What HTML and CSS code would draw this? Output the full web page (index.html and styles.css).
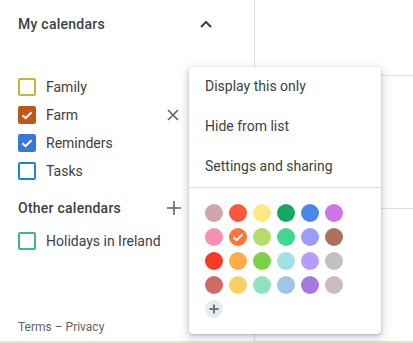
FILE: index.html
```html
<!DOCTYPE html>
<html lang="en">

<head>
    <meta charset="UTF-8">
    <meta name="viewport" content="width=device-width, initial-scale=1.0">
    <title>Calendars</title>
    <link rel="stylesheet" href="styles.css">
</head>

<body>
    <div id="app">
        <div class="sidebar">
            <div class="section-head head-mine">
                <span>My calendars</span>
                <svg class="chevron" width="12" height="8" viewBox="0 0 12 8"><path d="M1 7L6 2L11 7" fill="none" stroke="#3c4043" stroke-width="2"/></svg>
            </div>
            <ul class="cal-list">
                <li><span class="box" style="border-color:#c2b632"></span>Family</li>
                <li><span class="box checked" style="background:#c0561c;border-color:#c0561c"><svg viewBox="0 0 14 14"><path d="M2.5 7.2L5.6 10.2L11.5 4.3" fill="none" stroke="#fff" stroke-width="2"/></svg></span>Farm
                    <svg class="x-icon" width="12" height="12" viewBox="0 0 12 12"><path d="M1 1L11 11M11 1L1 11" stroke="#5f6368" stroke-width="1.6"/></svg>
                </li>
                <li><span class="box checked" style="background:#3a78d8;border-color:#3a78d8"><svg viewBox="0 0 14 14"><path d="M2.5 7.2L5.6 10.2L11.5 4.3" fill="none" stroke="#fff" stroke-width="2"/></svg></span>Reminders</li>
                <li><span class="box" style="border-color:#1d8bc1"></span>Tasks</li>
            </ul>
            <div class="section-head head-other">
                <span>Other calendars</span>
                <svg class="plus-icon" width="14" height="14" viewBox="0 0 14 14"><path d="M7 0V14M0 7H14" stroke="#5f6368" stroke-width="1.6"/></svg>
            </div>
            <ul class="cal-list">
                <li><span class="box" style="border-color:#47b384"></span>Holidays in Ireland</li>
            </ul>
            <div class="footer">Terms &ndash; Privacy</div>
        </div>
        <div class="grid">
            <div class="cell first"></div>
            <div class="cell"></div>
            <div class="cell"></div>
        </div>
    </div>
    <div class="bottom-line"></div>

    <div class="menu">
        <div class="menu-item">Display this only</div>
        <div class="menu-item">Hide from list</div>
        <div class="menu-item">Settings and sharing</div>
        <div class="divider"></div>
        <div class="swatches">
            <span class="dot" style="background:#cca6ac"></span>
            <span class="dot" style="background:#fa573c"></span>
            <span class="dot" style="background:#fbe983"></span>
            <span class="dot" style="background:#16a765"></span>
            <span class="dot" style="background:#4986e7"></span>
            <span class="dot" style="background:#cd74e6"></span>

            <span class="dot" style="background:#f691b2"></span>
            <span class="dot" style="background:#ff7537"><svg viewBox="0 0 18 18"><path d="M4.5 9.3L7.6 12.2L13.5 6.3" fill="none" stroke="#fff" stroke-width="2"/></svg></span>
            <span class="dot" style="background:#b3dc6c"></span>
            <span class="dot" style="background:#42d692"></span>
            <span class="dot" style="background:#9a9cff"></span>
            <span class="dot" style="background:#ac725e"></span>

            <span class="dot" style="background:#f83a22"></span>
            <span class="dot" style="background:#ffad46"></span>
            <span class="dot" style="background:#7bd148"></span>
            <span class="dot" style="background:#9fe1e7"></span>
            <span class="dot" style="background:#b99aff"></span>
            <span class="dot" style="background:#c2c2c2"></span>

            <span class="dot" style="background:#d06b64"></span>
            <span class="dot" style="background:#fad165"></span>
            <span class="dot" style="background:#92e1c0"></span>
            <span class="dot" style="background:#9fc6e7"></span>
            <span class="dot" style="background:#a47ae2"></span>
            <span class="dot" style="background:#cabdbf"></span>

            <span class="dot add"><svg viewBox="0 0 18 18"><path d="M9 4.5V13.5M4.5 9H13.5" stroke="#70757a" stroke-width="2"/></svg></span>
        </div>
    </div>
</body>
</html>
```

FILE: styles.css
```css
* {
    box-sizing: border-box;
}

body {
    margin: 0;
    font-family: Roboto, "Liberation Sans", sans-serif;
    color: #3c4043;
    background: #fff;
    overflow: hidden;
}

#app {
    display: flex;
    height: 341px;
}

.sidebar {
    width: 254px;
    display: flex;
    flex-direction: column;
}

.section-head {
    display: flex;
    align-items: center;
    padding-left: 18px;
    font-size: 14px;
    font-weight: 500;
    letter-spacing: 0.25px;
    color: #3c4043;
}

.head-mine {
    height: 48px;
    padding-right: 42px;
    margin-bottom: 25px;
}

.head-other {
    height: 40px;
    margin-top: 3px;
    margin-bottom: -1px;
    padding-right: 73px;
}

.section-head span {
    flex: 1;
}

.cal-list {
    list-style: none;
    margin: 0;
    padding: 0;
}

.cal-list li {
    display: flex;
    align-items: center;
    height: 28px;
    padding-left: 18px;
    padding-right: 75px;
    font-size: 14px;
    color: #3c4043;
}

.box {
    width: 18px;
    height: 18px;
    border: 2px solid #5f6368;
    border-radius: 2px;
    margin-right: 10px;
    display: flex;
    align-items: center;
    justify-content: center;
}

.box svg {
    width: 14px;
    height: 14px;
}

.x-icon {
    margin-left: auto;
}

.footer {
    margin-top: auto;
    padding: 0 0 6px 18px;
    font-size: 12px;
    line-height: 16px;
    color: #5f6368;
}

.grid {
    flex: 1;
    border-left: 1px solid #dadce0;
}

.cell {
    height: 133px;
    border-bottom: 1px solid #dadce0;
}

.cell.first {
    height: 76px;
}

.bottom-line {
    height: 2px;
    background: #e3ecbf;
}

.menu {
    position: absolute;
    left: 189px;
    top: 67px;
    width: 192px;
    height: 267px;
    background: #fff;
    border-radius: 4px;
    box-shadow: 0 1px 3px 0 rgba(60, 64, 67, 0.3), 0 4px 8px 3px rgba(60, 64, 67, 0.15);
}

.menu-item {
    height: 40px;
    line-height: 39px;
    padding-left: 16px;
    font-size: 14px;
    color: #3c4043;
}

.divider {
    border-top: 1px solid #dadce0;
}

.swatches {
    display: grid;
    grid-template-columns: repeat(6, 24px);
    grid-auto-rows: 24px;
    padding: 13px 13px;
}

.dot {
    width: 18px;
    height: 18px;
    margin: 3px;
    border-radius: 50%;
    display: flex;
}

.dot svg {
    width: 18px;
    height: 18px;
}

.dot.add {
    background: #e8eaed;
}
```
